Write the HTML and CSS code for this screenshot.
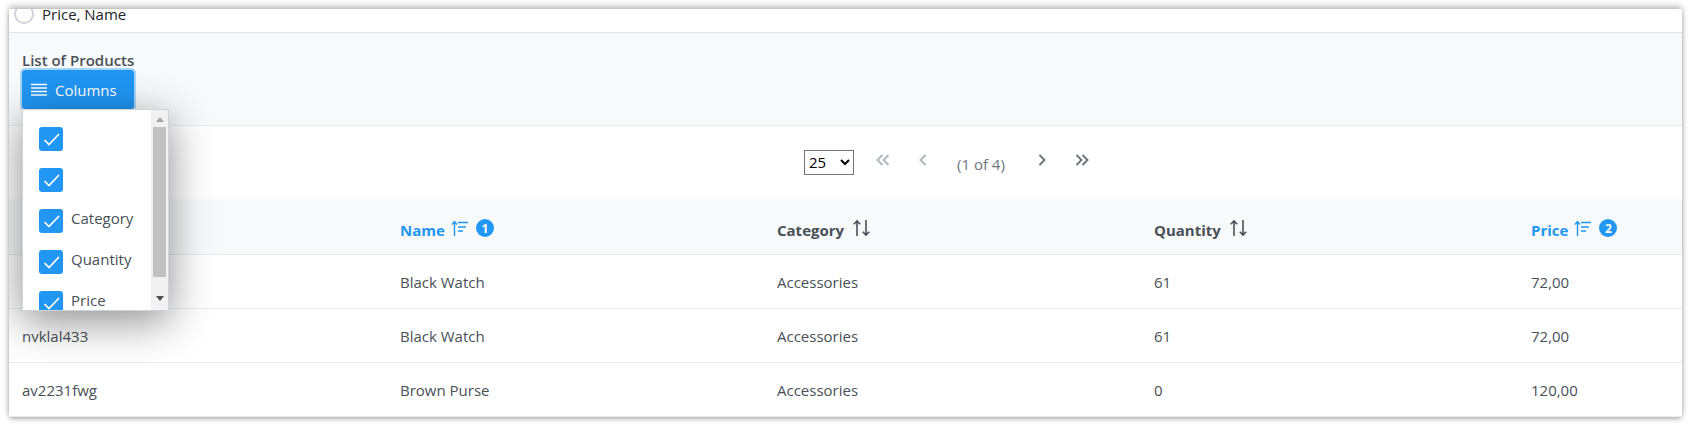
FILE: index.html
```html
<!DOCTYPE html>
<html lang="en">
<head>
    <meta charset="UTF-8">
    <meta name="viewport" content="width=device-width, initial-scale=1.0">
    <title>List of Products</title>
    <link rel="stylesheet" href="styles.css">
</head>
<body>
    <div class="card">
        <div class="sort-option">
            <span class="radio-clip"><span class="radio"></span></span>
            <span class="radio-label">Price, Name</span>
        </div>

        <div class="card-body">
            <div class="caption">
                <div class="caption-title">List of Products</div>
                <div class="toggler-wrap">
                    <button class="toggler">
                        <svg class="toggler-icon" width="16" height="14" viewBox="0 0 16 14">
                            <path d="M0 1.500h16M0 5h16M0 8.500h16M0 12h16" stroke="#fff" stroke-width="1.500" fill="none"/>
                        </svg>
                        <span>Columns</span>
                    </button>
                    <div class="column-panel">
                        <div class="column-list">
                            <div class="column-item">
                                <span class="checkbox"><svg width="24" height="24" viewBox="0 0 24 24"><path d="M5.500 13L10 17.500 20 7" stroke="#fff" stroke-width="1.700" fill="none"/></svg></span>
                            </div>
                            <div class="column-item">
                                <span class="checkbox"><svg width="24" height="24" viewBox="0 0 24 24"><path d="M5.500 13L10 17.500 20 7" stroke="#fff" stroke-width="1.700" fill="none"/></svg></span>
                            </div>
                            <div class="column-item">
                                <span class="checkbox"><svg width="24" height="24" viewBox="0 0 24 24"><path d="M5.500 13L10 17.500 20 7" stroke="#fff" stroke-width="1.700" fill="none"/></svg></span>
                                <span class="column-label">Category</span>
                            </div>
                            <div class="column-item">
                                <span class="checkbox"><svg width="24" height="24" viewBox="0 0 24 24"><path d="M5.500 13L10 17.500 20 7" stroke="#fff" stroke-width="1.700" fill="none"/></svg></span>
                                <span class="column-label">Quantity</span>
                            </div>
                            <div class="column-item">
                                <span class="checkbox"><svg width="24" height="24" viewBox="0 0 24 24"><path d="M5.500 13L10 17.500 20 7" stroke="#fff" stroke-width="1.700" fill="none"/></svg></span>
                                <span class="column-label">Price</span>
                            </div>
                        </div>
                        <div class="scrollbar">
                            <span class="scroll-up"></span>
                            <span class="scroll-thumb"></span>
                            <span class="scroll-down"></span>
                        </div>
                    </div>
                </div>
            </div>

            <div class="paginator">
                <select class="page-size">
                    <option>25</option>
                </select>
                <span class="page-link">
                    <svg width="14" height="12" viewBox="0 0 14 12"><path d="M6.500 1L1.500 6l5 5M12.500 1l-5 5 5 5" stroke="#adb5bd" stroke-width="1.900" fill="none"/></svg>
                </span>
                <span class="page-link">
                    <svg width="8" height="12" viewBox="0 0 8 12"><path d="M6.500 1L1.500 6l5 5" stroke="#adb5bd" stroke-width="1.900" fill="none"/></svg>
                </span>
                <span class="page-current">(1 of 4)</span>
                <span class="page-link">
                    <svg width="8" height="12" viewBox="0 0 8 12"><path d="M1.500 1l5 5-5 5" stroke="#6c757d" stroke-width="1.900" fill="none"/></svg>
                </span>
                <span class="page-link">
                    <svg width="14" height="12" viewBox="0 0 14 12"><path d="M1.500 1l5 5-5 5M7.500 1l5 5-5 5" stroke="#6c757d" stroke-width="1.900" fill="none"/></svg>
                </span>
            </div>

            <table class="products">
                <thead>
                    <tr>
                        <th>Code</th>
                        <th class="sorted">
                            <span class="th-inner">Name
                                <svg class="sort-amount" width="17" height="16" viewBox="0 0 17 16"><path d="M3.500 16V1.500M1 4.500l2.500-3 2.500 3M7 2.500h10M7 7h8M7 11h5" stroke="#2196f3" stroke-width="1.400" fill="none"/></svg>
                                <span class="badge">1</span>
                            </span>
                        </th>
                        <th>
                            <span class="th-inner">Category
                                <svg class="sort-alt" width="18" height="18" viewBox="0 0 18 18"><path d="M4 17V2M.8 5.200L4 2l3.200 3.200M13 1v15M9.800 12.800L13 16l3.200-3.200" stroke="#495057" stroke-width="1.600" fill="none"/></svg>
                            </span>
                        </th>
                        <th>
                            <span class="th-inner">Quantity
                                <svg class="sort-alt" width="18" height="18" viewBox="0 0 18 18"><path d="M4 17V2M.8 5.200L4 2l3.200 3.200M13 1v15M9.800 12.800L13 16l3.200-3.200" stroke="#495057" stroke-width="1.600" fill="none"/></svg>
                            </span>
                        </th>
                        <th class="sorted">
                            <span class="th-inner">Price
                                <svg class="sort-amount" width="17" height="16" viewBox="0 0 17 16"><path d="M3.500 16V1.500M1 4.500l2.500-3 2.500 3M7 2.500h10M7 7h8M7 11h5" stroke="#2196f3" stroke-width="1.400" fill="none"/></svg>
                                <span class="badge">2</span>
                            </span>
                        </th>
                    </tr>
                </thead>
                <tbody>
                    <tr>
                        <td>nvklal433</td>
                        <td>Black Watch</td>
                        <td>Accessories</td>
                        <td>61</td>
                        <td>72,00</td>
                    </tr>
                    <tr>
                        <td>nvklal433</td>
                        <td>Black Watch</td>
                        <td>Accessories</td>
                        <td>61</td>
                        <td>72,00</td>
                    </tr>
                    <tr>
                        <td>av2231fwg</td>
                        <td>Brown Purse</td>
                        <td>Accessories</td>
                        <td>0</td>
                        <td>120,00</td>
                    </tr>
                </tbody>
            </table>
        </div>
    </div>
</body>
</html>
```

FILE: styles.css
```css
* {
    box-sizing: border-box;
}
body {
    font-family: "Open Sans", "Noto Sans", sans-serif;
    font-size: 15px;
    color: #495057;
    margin: 0;
    padding: 9px 8px 9px 9px;
    background-color: #fff;
}
.card {
    background-color: #fff;
    box-shadow: 0 -3px 6px 0 rgba(0, 0, 0, 0.24), 0 3px 5px -1px rgba(0, 0, 0, 0.28), 0 0 6px rgba(0, 0, 0, 0.06);
}
.card-body {
    overflow: hidden;
}
.sort-option {
    display: flex;
    height: 24px;
    padding-left: 5px;
    border-bottom: 1px solid #e3e6e9;
    color: #212529;
}
.radio-clip {
    display: block;
    width: 20px;
    height: 15px;
    margin-right: 8px;
    overflow: hidden;
}
.radio {
    display: block;
    width: 20px;
    height: 20px;
    margin-top: -5px;
    border: 2px solid #ced4da;
    border-radius: 50%;
}
.radio-label {
    line-height: 10px;
}
.caption {
    height: 93px;
    background-color: #f8f9fa;
    border-bottom: 1px solid #e9ecef;
    padding: 15px 0 0 13px;
}
.caption-title {
    font-weight: 600;
    line-height: 19px;
    padding-top: 3px;
}
.toggler-wrap {
    position: relative;
}
.toggler {
    display: flex;
    align-items: center;
    width: 112px;
    height: 39px;
    padding: 1px 0 0 8px;
    font: inherit;
    color: #fff;
    background-color: #2196f3;
    border: 1px solid #2196f3;
    border-radius: 3px;
    box-shadow: 0 0 0 2px #a6d5fa;
}
.toggler-icon {
    margin: -1px 8px 0 0;
}
.column-panel {
    position: absolute;
    top: 39px;
    left: 0;
    z-index: 2;
    display: flex;
    width: 147px;
    height: 202px;
    background-color: #fff;
    border: 1px solid #ced4da;
    box-shadow: 0 10px 40px rgba(0, 0, 0, 0.45);
}
.column-list {
    flex: 1;
    overflow: hidden;
    padding: 17px 0 0 16px;
}
.column-item {
    display: flex;
    align-items: center;
    height: 24px;
    margin-bottom: 17px;
}
.column-label {
    margin-top: -6px;
}
.checkbox {
    display: block;
    width: 24px;
    height: 24px;
    margin-right: 8px;
    flex: none;
    background-color: #2196f3;
    border-radius: 3px;
}
.checkbox svg {
    display: block;
}
.scrollbar {
    display: flex;
    flex-direction: column;
    align-items: center;
    width: 17px;
    background-color: #f1f1f1;
}
.scroll-up {
    margin: 7px 0 5px;
    border-left: 4px solid transparent;
    border-right: 4px solid transparent;
    border-bottom: 5px solid #a3a3a3;
}
.scroll-thumb {
    width: 13px;
    height: 150px;
    background-color: #c1c1c1;
}
.scroll-down {
    margin-top: 19px;
    border-left: 4px solid transparent;
    border-right: 4px solid transparent;
    border-top: 5px solid #505050;
}
.paginator {
    display: flex;
    align-items: center;
    height: 73px;
    padding: 0 0 1px 795px;
    color: #6c757d;
}
.page-size {
    width: 50px;
    height: 25px;
    margin-right: 17px;
    font-family: inherit;
    font-size: 15px;
    color: #000;
    background-color: #fff;
    border: 1px solid #767676;
}
.page-link {
    display: flex;
    justify-content: center;
    align-items: center;
    width: 24px;
    height: 24px;
    margin-right: 16px;
    margin-top: -4px;
}
.page-current {
    width: 50px;
    margin: 0 23px 0 6px;
    padding-top: 3px;
    white-space: nowrap;
}
.products {
    width: 100%;
    border-collapse: collapse;
    table-layout: fixed;
}
.products th,
.products td {
    width: 377px;
    padding: 0 14px;
    text-align: left;
}
.products th:first-child,
.products td:first-child {
    padding-left: 13px;
}
.products th:last-child,
.products td:last-child {
    width: auto;
}
.products th {
    height: 55px;
    padding-top: 7px;
    font-weight: 700;
    background-color: #f8f9fa;
    border-bottom: 1px solid #e9ecef;
}
.products td {
    height: 54px;
    padding-top: 1px;
    border-bottom: 1px solid #e9ecef;
}
.th-inner {
    display: flex;
    align-items: center;
    gap: 7px;
}
.sort-amount {
    margin: -3px 0 0 -1px;
}
.sort-alt {
    margin: -3px 0 0 2px;
}
.sorted {
    color: #2196f3;
}
.badge {
    display: flex;
    justify-content: center;
    align-items: center;
    width: 18px;
    height: 18px;
    margin: -3px 0 0 1px;
    font-size: 12px;
    color: #fff;
    background-color: #2196f3;
    border-radius: 50%;
}
```
